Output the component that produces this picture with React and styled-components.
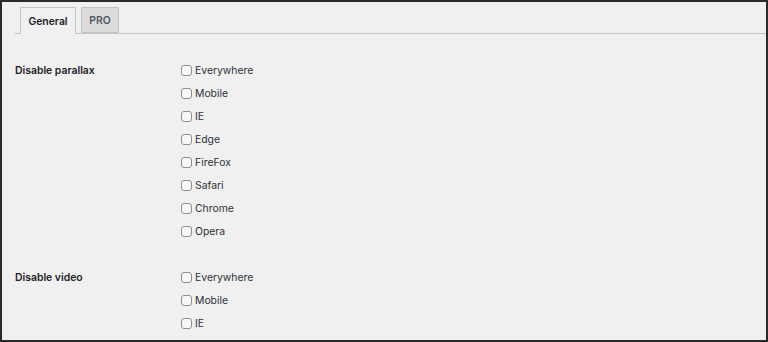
import React from 'react'
import styled, { createGlobalStyle } from 'styled-components'

const sections = [
  {
    title: 'Disable parallax',
    options: ['Everywhere', 'Mobile', 'IE', 'Edge', 'FireFox', 'Safari', 'Chrome', 'Opera'],
  },
  {
    title: 'Disable video',
    options: ['Everywhere', 'Mobile', 'IE'],
  },
]

const Global = createGlobalStyle`
  html, body {
    margin: 0;
    padding: 0;
    background: #f0f0f1;
  }
  * {
    box-sizing: border-box;
  }
`

const App = () => {
  return (
    <>
      <Global />
      <Frame>
        <TabNav>
          <Tab active>General</Tab>
          <Tab>PRO</Tab>
        </TabNav>
        <Settings>
          {sections.map((section) => (
            <Row key={section.title}>
              <Label>{section.title}</Label>
              <Options>
                {section.options.map((option) => (
                  <Option key={option}>
                    <Box type="checkbox" />
                    {option}
                  </Option>
                ))}
              </Options>
            </Row>
          ))}
        </Settings>
      </Frame>
    </>
  )
}

export default App

const Frame = styled.div`
  width: 768px;
  height: 342px;
  overflow: hidden;
  border: 2px solid #2a2a2a;
  background: #f0f0f1;
  font-family: Inter, 'Liberation Sans', sans-serif;
  color: #1d2327;
`
const TabNav = styled.div`
  display: flex;
  align-items: flex-end;
  gap: 5px;
  margin: 5px 0 0 13px;
  padding-left: 5px;
  height: 27px;
  border-bottom: 1px solid #c3c4c7;
`
const Tab = styled.div`
  height: ${(p) => (p.active ? '27px' : '26px')};
  margin-bottom: ${(p) => (p.active ? '-1px' : '0')};
  width: ${(p) => (p.active ? '56px' : '38px')};
  display: flex;
  align-items: center;
  justify-content: center;
  font-size: 10.4px;
  font-weight: 600;
  border: 1px solid #c3c4c7;
  border-bottom: ${(p) => (p.active ? 'none' : '1px solid #c3c4c7')};
  background: ${(p) => (p.active ? '#f0f0f1' : '#dcdcde')};
  color: ${(p) => (p.active ? '#1d2327' : '#50575e')};
`
const Settings = styled.div`
  padding: 14px 0 0 13px;
`
const Row = styled.div`
  display: grid;
  grid-template-columns: 166px 1fr;
  padding: 11px 0 12px;
`
const Label = styled.div`
  font-size: 10.4px;
  font-weight: 600;
  line-height: 23px;
`
const Options = styled.div`
  display: flex;
  flex-direction: column;
`
const Option = styled.label`
  display: flex;
  align-items: center;
  gap: 3px;
  height: 23px;
  font-size: 10.4px;
  color: #2c3338;
`
const Box = styled.input`
  appearance: none;
  margin: 0;
  width: 11px;
  height: 11px;
  border: 1px solid #8c8f94;
  border-radius: 3px;
  background: #f8f8f8;
`
